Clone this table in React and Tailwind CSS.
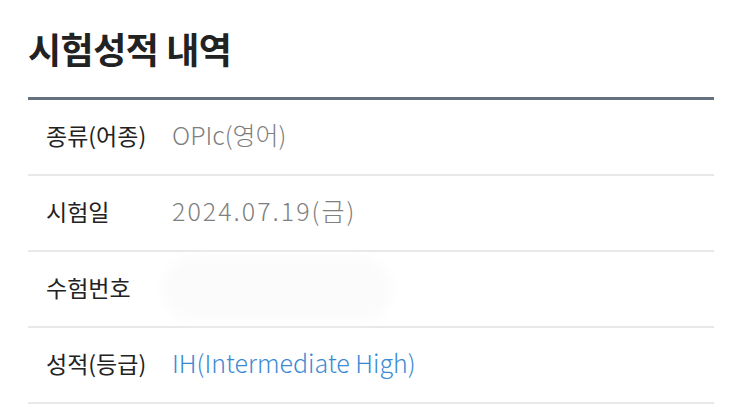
const rows = [
    { label: '종류(어종)', value: 'OPIc(영어)', tone: 'gray' },
    { label: '시험일', value: '2024.07.19(금)', tone: 'date' },
    { label: '수험번호', value: '', tone: 'hidden' },
    { label: '성적(등급)', value: 'IH(Intermediate High)', tone: 'blue' },
];

function App() {
    return (
        <div className="w-[743px] h-[407px] overflow-hidden bg-white font-['Noto_Sans_CJK_KR','Noto_Sans',sans-serif]">
            <div className="px-[28px] pt-[24px]">
                <h1 className="text-[36px] leading-[48px] font-bold text-[#222] tracking-[-0.5px]">시험성적 내역</h1>
                <div className="mt-[25px] w-[686px] border-t-[3px] border-[#65717f]">
                    {rows.map((row) => (
                        <div
                            key={row.label}
                            className="flex h-[76px] items-center border-b-2 border-[#e8e8e8] pl-[18px] pb-[4px]"
                        >
                            <div className="w-[126px] text-[23px] text-[#222]">{row.label}</div>
                            {row.tone === 'hidden' && (
                                <div className="h-[64px] w-[230px] -ml-[10px] mt-[4px] rounded-[40px] bg-[#fbfbfb] blur-[6px]"></div>
                            )}
                            {row.tone === 'gray' && <div className="text-[25px] font-light text-[#7f7f7f]">{row.value}</div>}
                            {row.tone === 'date' && (
                                <div className="text-[25px] font-light tracking-[2px] text-[#7f7f7f]">{row.value}</div>
                            )}
                            {row.tone === 'blue' && <div className="text-[25px] font-light text-[#3c8ad4]">{row.value}</div>}
                        </div>
                    ))}
                </div>
            </div>
        </div>
    );
}

export default App;
